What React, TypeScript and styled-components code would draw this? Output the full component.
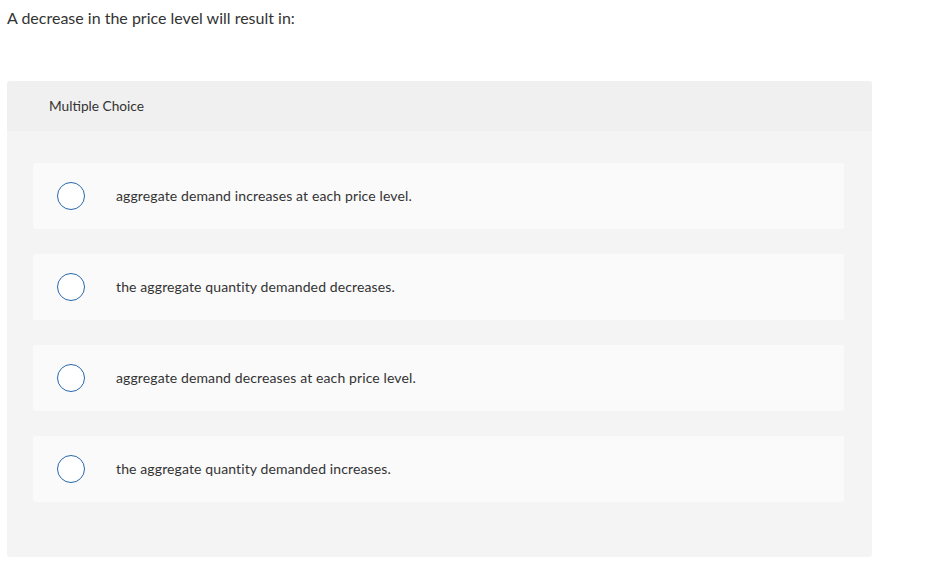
import React from "react";
import styled, { createGlobalStyle } from "styled-components";

const Global = createGlobalStyle`
  html, body { margin: 0; padding: 0; background: #ffffff; }
  body { font-family: "Lato", "Liberation Sans", sans-serif; color: #333333; }
`;

const Page = styled.div`
  padding: 8px 66px 0 7px;
  width: 938px;
  box-sizing: border-box;
`;

const Question = styled.p`
  margin: 0 0 53px;
  font-size: 16px;
  line-height: 20px;
  color: #333333;
`;

const Panel = styled.div`
  background: #f4f4f4;
  border-radius: 3px;
  overflow: hidden;
`;

const PanelHeader = styled.div`
  height: 50px;
  box-sizing: border-box;
  padding: 0 0 2px 42px;
  background: #f0f0f0;
  display: flex;
  align-items: center;
  font-size: 13.7px;
  color: #333333;
`;

const Options = styled.div`
  display: flex;
  flex-direction: column;
  gap: 25px;
  padding: 32px 28px 55px 26px;
`;

const Option = styled.label`
  height: 66px;
  background: #fafafa;
  border-radius: 3px;
  display: flex;
  align-items: center;
  padding-left: 24px;
  cursor: pointer;
`;

const Radio = styled.span`
  width: 28px;
  height: 28px;
  box-sizing: border-box;
  border: 1.5px solid #2767ad;
  border-radius: 50%;
  background: #ffffff;
  flex: none;
`;

const OptionText = styled.span`
  margin: 0 0 2px 31px;
  font-size: 14px;
  letter-spacing: 0.12px;
  color: #333333;
`;

const choices = [
  "aggregate demand increases at each price level.",
  "the aggregate quantity demanded decreases.",
  "aggregate demand decreases at each price level.",
  "the aggregate quantity demanded increases.",
];

export default function App() {
  return (
    <>
      <Global />
      <Page>
        <Question>A decrease in the price level will result in:</Question>
        <Panel>
          <PanelHeader>Multiple Choice</PanelHeader>
          <Options>
            {choices.map((c) => (
              <Option key={c}>
                <Radio />
                <OptionText>{c}</OptionText>
              </Option>
            ))}
          </Options>
        </Panel>
      </Page>
    </>
  );
}
